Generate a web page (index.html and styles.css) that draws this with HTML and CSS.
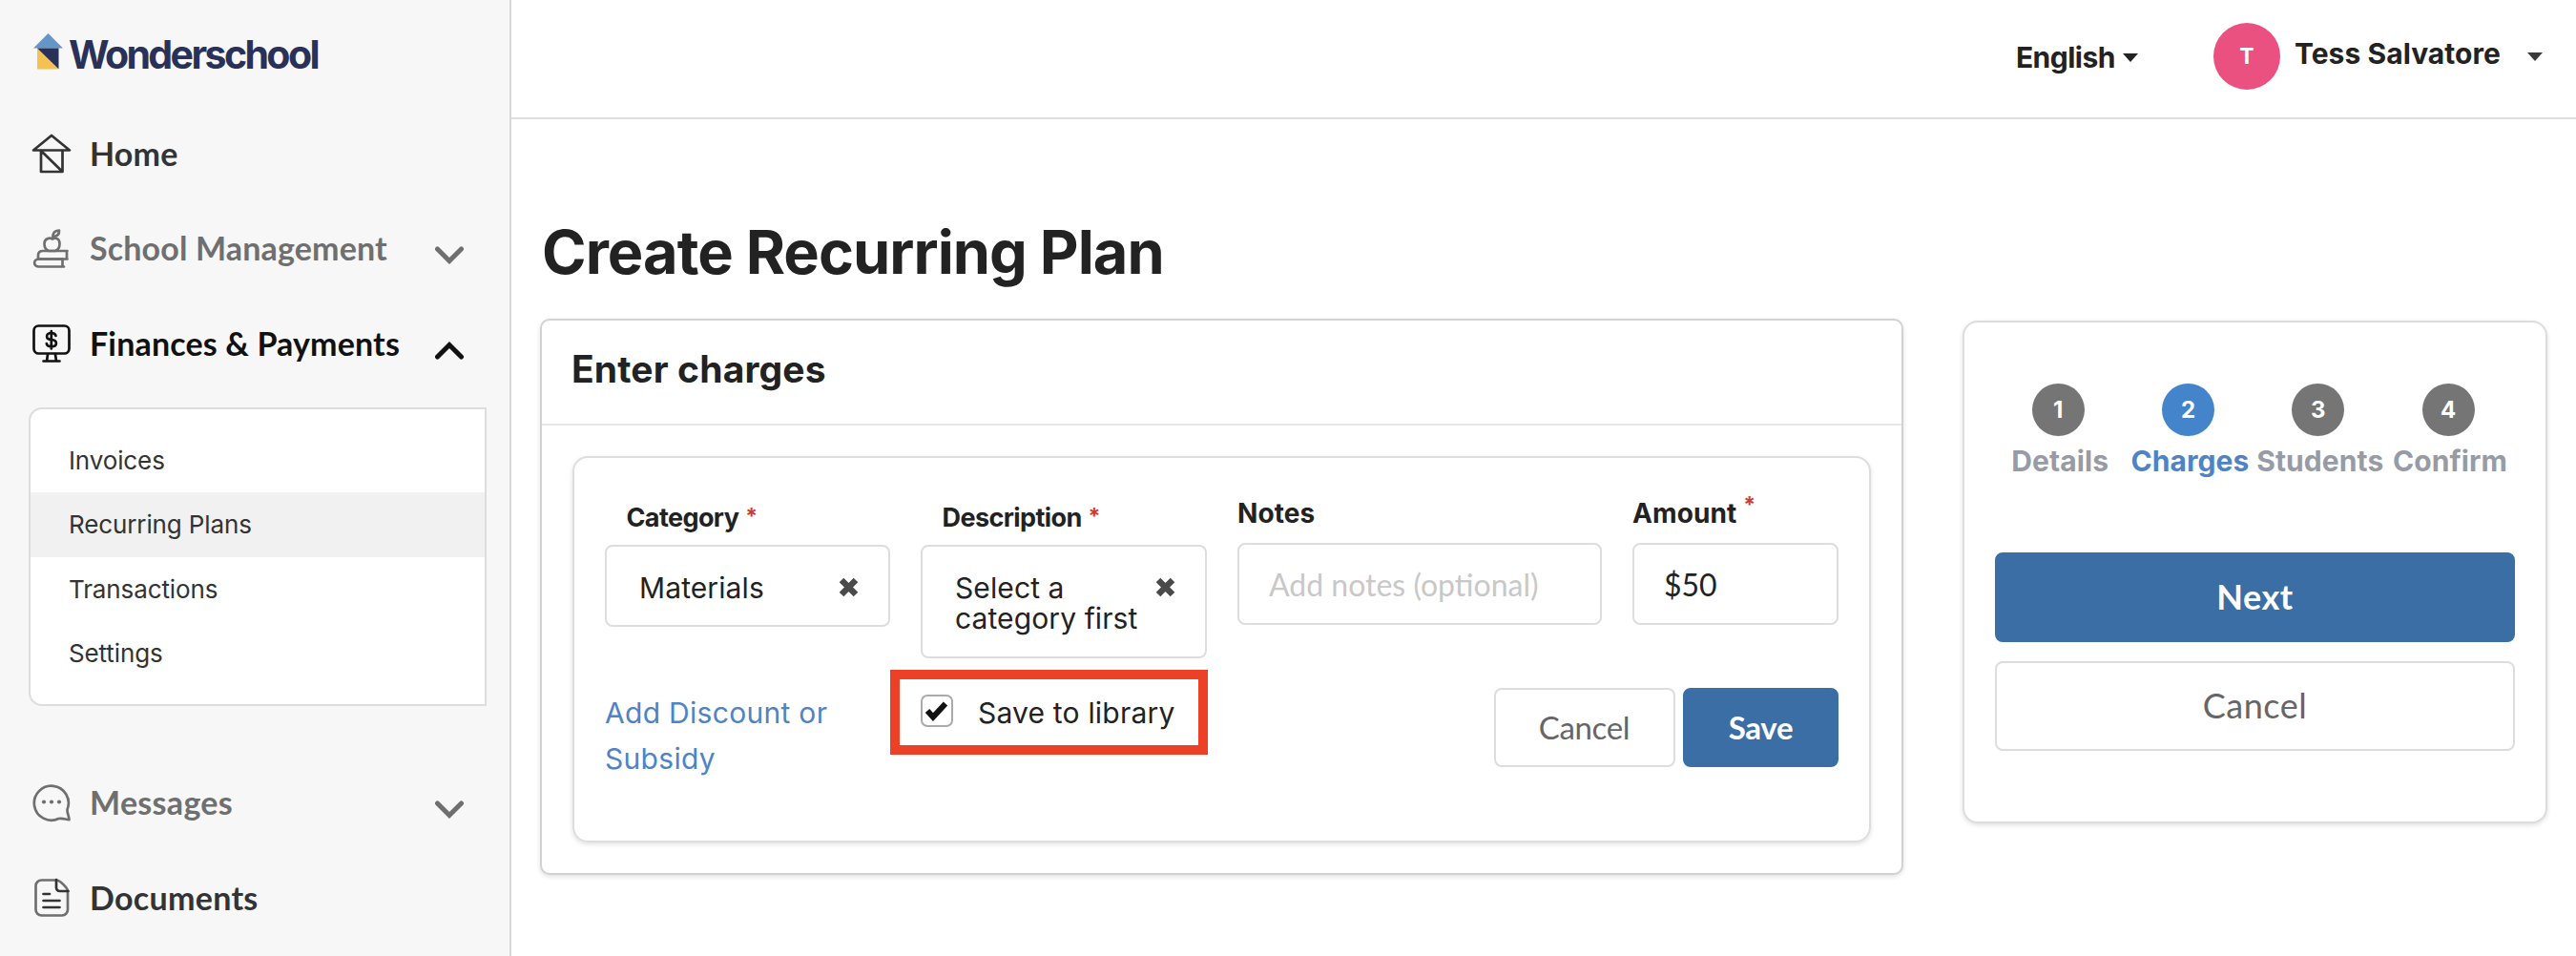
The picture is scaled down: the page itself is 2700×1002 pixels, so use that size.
FILE: index.html
```
<!DOCTYPE html>
<html lang="en">
<head>
  <meta charset="UTF-8">
  <title>Create Recurring Plan - Wonderschool</title>
  <link rel="stylesheet" href="styles.css">
</head>
<body>
  <aside class="sidebar">
    <div class="logo">
      <svg class="logo-mark" width="31" height="38" viewBox="0 0 31 38">
        <path d="M15.5 0L31 15.5H0z" fill="#6497c9"/>
        <path d="M4 15.5V37.5H26z" fill="#f4c152"/>
        <path d="M4 15.5H26.500V37.500z" fill="#2a3158"/>
      </svg>
      <span class="logo-text">Wonderschool</span>
    </div>

    <nav>
      <a class="nav-item dark">
        <svg class="icon" viewBox="0 0 44 44">
          <path d="M3 18.500L22 3l19 15.500z"/>
          <path d="M11 19v22h22.500V19M11.500 19.500l21.500 21"/>
        </svg>
        <span>Home</span>
      </a>
      <a class="nav-item">
        <svg class="icon" viewBox="0 0 44 44">
          <path d="M23 12.500c-3-1.800-8.500-.8-8.500 5 0 3.500 2 6.500 4.500 7.500h7c2.500-1 4.500-4 4.500-7.500 0-5.800-4.500-6.800-7.500-5z"/>
          <path d="M23.500 11.500c-.5-5 1.500-8 6.500-8 .2 4-2 6-5.500 6.500"/>
          <path d="M38.500 25H13c-4 0-5 2-5 4.500V33M38 25v8.500M9 33.500h29.500"/>
          <path d="M34 33.500H9c-6.500 0-6.500 8 0 8h26M33.500 34v7.500"/>
        </svg>
        <span>School Management</span>
        <svg class="chevron" viewBox="0 0 30 20"><path d="M2.500 3L15 15.500 27.500 3"/></svg>
      </a>
      <a class="nav-item active">
        <svg class="icon" viewBox="0 0 44 44">
          <rect x="3.500" y="3.500" width="37" height="29" rx="5"/>
          <path d="M26.500 14c-.4-2-2-3-4.700-3-6.300 0-6.200 6.700 0 7 6.800.3 6.800 7.300 0 7.300-2.800 0-4.600-1.200-5-3.300M21.800 9v18.500"/>
          <path d="M18 33.500l-1 7M26 33.500l1 7M13.500 40.500h17"/>
        </svg>
        <span>Finances &amp; Payments</span>
        <svg class="chevron" viewBox="0 0 30 20"><path d="M2.500 17L15 4.500 27.500 17"/></svg>
      </a>

      <div class="submenu">
        <a>Invoices</a>
        <a class="selected">Recurring Plans</a>
        <a>Transactions</a>
        <a>Settings</a>
      </div>

      <a class="nav-item messages">
        <svg class="icon" viewBox="0 0 44 44">
          <path d="M38.500 29.500a18 18 0 1 0-9 9.500c4-.9 7 .8 11 1.200-.3-4-2.200-7-2-10.700z"/>
          <g class="dots"><circle cx="14" cy="21.500" r="2.100"/><circle cx="22" cy="21.500" r="2.100"/><circle cx="30" cy="21.500" r="2.100"/></g>
        </svg>
        <span>Messages</span>
        <svg class="chevron" viewBox="0 0 30 20"><path d="M2.500 3L15 15.500 27.500 3"/></svg>
      </a>
      <a class="nav-item dark documents">
        <svg class="icon" viewBox="0 0 44 44">
          <path class="page" d="M27 3.500H11.500a6 6 0 0 0-6 6v25a6 6 0 0 0 6 6h21.500a6 6 0 0 0 6-6V15c0-3-8-11.500-12-11.500z"/>
          <path d="M27 3v8.500a3.500 3.500 0 0 0 3.500 3.500H39.500M13.500 18h6.500M13.500 25h17M13.500 32h17"/>
        </svg>
        <span>Documents</span>
      </a>
    </nav>
  </aside>

  <div class="page-body">
    <header class="topbar">
      <div class="language">English <span class="caret"></span></div>
      <div class="avatar">T</div>
      <div class="user-name">Tess Salvatore</div>
      <span class="caret user-caret"></span>
    </header>

    <main>
      <h1>Create Recurring Plan</h1>
      <div class="columns">
        <section class="card charges">
          <h2>Enter charges</h2>
          <form class="charge">
            <div class="field">
              <label class="small">Category<span class="required">*</span></label>
              <div class="select">
                <span>Materials</span>
                <svg class="clear" viewBox="0 0 21 21"><path d="M3 3l15 15M18 3L3 18"/></svg>
              </div>
            </div>
            <div class="field">
              <label class="small">Description<span class="required">*</span></label>
              <div class="select">
                <span>Select a<br>category first</span>
                <svg class="clear" viewBox="0 0 21 21"><path d="M3 3l15 15M18 3L3 18"/></svg>
              </div>
            </div>
            <div class="field">
              <label for="notes">Notes</label>
              <input type="text" id="notes" placeholder="Add notes (optional)">
            </div>
            <div class="field">
              <label for="amount">Amount<span class="required">*</span></label>
              <input type="text" id="amount" value="$50">
            </div>

            <a class="discount">Add Discount or<br>Subsidy</a>
            <div class="library">
              <span class="checkbox">
                <svg viewBox="0 0 30 30"><path d="M5 15l6 6.500L24 7.500"/></svg>
              </span>
              Save to library
            </div>
            <div class="actions">
              <button type="button" class="btn">Cancel</button>
              <button type="button" class="btn primary">Save</button>
            </div>
          </form>
        </section>

        <section class="card progress">
          <div class="steps">
            <div class="step"><span class="number">1</span><span class="step-name">Details</span></div>
            <div class="step current"><span class="number">2</span><span class="step-name">Charges</span></div>
            <div class="step"><span class="number">3</span><span class="step-name">Students</span></div>
            <div class="step"><span class="number">4</span><span class="step-name">Confirm</span></div>
          </div>
          <button type="button" class="btn large primary">Next</button>
          <button type="button" class="btn large">Cancel</button>
        </section>
      </div>
    </main>
  </div>
</body>
</html>
```
FILE: styles.css
```
*,
*::after {
  box-sizing: border-box;
}
body {
  margin: 0;
  display: flex;
  height: 1002px;
  overflow: hidden;
  background: #fff;
  color: #222;
  font-family: Inter, "Liberation Sans", sans-serif;
}

/* Sidebar */
.sidebar {
  width: 536px;
  flex: none;
  background: #f7f7f7;
  border-right: 2px solid #d8d8d8;
}
.logo {
  display: flex;
  height: 111px;
  padding: 35px 0 0 35px;
}
.logo-mark {
  flex: none;
}
.logo-text {
  margin-left: 6px;
  color: #2a3158;
  font-size: 41px;
  font-weight: 700;
  line-height: 44px;
  letter-spacing: -2.6px;
}
.nav-item {
  display: flex;
  align-items: center;
  height: 99.5px;
  padding: 0 48px 0 32px;
  color: #6f6f6f;
  font-family: Lato, sans-serif;
  font-size: 34px;
  font-weight: 700;
  letter-spacing: 0.15px;
}
.nav-item span {
  padding-bottom: 1.5px;
}
.nav-item.dark {
  color: #333;
}
.nav-item.active {
  color: #111;
}
.nav-item.messages,
.nav-item.documents {
  height: 100px;
  letter-spacing: 0.3px;
}
.icon {
  width: 44px;
  height: 44px;
  margin-right: 18px;
  fill: none;
  stroke: currentColor;
  stroke-width: 2.7;
  stroke-linecap: round;
  stroke-linejoin: round;
}
.icon .dots {
  fill: currentColor;
  stroke: none;
}
.icon .page {
  stroke: #6f6f6f;
}
.chevron {
  width: 30px;
  height: 20px;
  margin: 15px 0 0 auto;
  fill: none;
  stroke: currentColor;
  stroke-width: 5;
  stroke-linecap: round;
}
.submenu {
  width: 480px;
  height: 313px;
  margin: 17.5px 0 51px 30px;
  padding-top: 20px;
  background: #fff;
  border: 2px solid #ddd;
  border-radius: 14px 0 0 14px;
}
.submenu a {
  display: block;
  height: 67.3px;
  padding-left: 40px;
  color: #333;
  font-size: 26px;
  line-height: 68.5px;
  letter-spacing: -0.12px;
}
.submenu .selected {
  background: #f1f1f1;
}

/* Top bar */
.page-body {
  flex: 1;
}
.topbar {
  display: flex;
  align-items: center;
  justify-content: flex-end;
  height: 125px;
  padding: 0 35px 5px 0;
  border-bottom: 2px solid #ddd;
  font-size: 30px;
  font-weight: 700;
}
.language {
  display: flex;
  align-items: center;
  gap: 8px;
  padding-top: 2px;
  letter-spacing: -0.5px;
}
.caret {
  border: 8px solid transparent;
  border-top: 9px solid #222;
  border-bottom: 0;
}
.user-caret {
  margin-left: 28px;
  border-top-color: #3a3a3a;
}
.avatar {
  width: 70px;
  height: 70px;
  margin: 0 15px 0 79px;
  border-radius: 50%;
  background: #ea5080;
  color: #fff;
  font-size: 23px;
  line-height: 70px;
  text-align: center;
}
.user-name {
  margin-bottom: 6px;
  letter-spacing: 0.05px;
}

/* Content */
main {
  padding: 101px 30px 0;
}
h1 {
  margin: 0 0 32px 2px;
  font-size: 63px;
  font-weight: 700;
  line-height: 76px;
  letter-spacing: -0.95px;
}
.columns {
  display: flex;
  align-items: flex-start;
  gap: 62.5px;
}
.card {
  background: #fff;
  border: 2px solid #ddd;
  border-radius: 16px;
  box-shadow: 0 2px 5px rgba(0, 0, 0, 0.12);
}
.charges {
  width: 1428.5px;
  border-color: #d2d2d2;
  border-radius: 10px;
}
h2 {
  height: 110px;
  margin: 0;
  padding-left: 31px;
  border-bottom: 2px solid #e8e8e8;
  font-size: 39px;
  font-weight: 700;
  line-height: 102px;
  letter-spacing: 0.15px;
}
.charge {
  display: grid;
  grid-template-columns: 298.5px 299.5px 381.5px 216px;
  grid-template-rows: 179px auto;
  column-gap: 32.5px;
  row-gap: 32px;
  height: 404.5px;
  margin: 32px;
  padding: 30px 0 0 32px;
  border: 2px solid #ddd;
  border-radius: 16px;
  box-shadow: 0 2px 5px rgba(0, 0, 0, 0.12);
}
label {
  display: block;
  height: 59px;
  font-size: 28px;
  font-weight: 700;
  line-height: 56px;
  letter-spacing: 0.1px;
  white-space: nowrap;
}
label.small {
  height: 61px;
  padding-left: 22.5px;
  font-size: 27px;
  line-height: 66px;
  letter-spacing: -0.6px;
}
.required {
  position: relative;
  top: -11px;
  margin-left: 7px;
  color: #cf3a32;
  font-size: 23px;
  line-height: 1;
}
.small .required {
  top: -3px;
}
.select {
  display: flex;
  justify-content: space-between;
  padding: 26.5px 31px 23px 34px;
  border: 2px solid #ddd;
  border-radius: 8px;
  font-size: 30px;
  line-height: 32.5px;
  letter-spacing: 0.1px;
}
.clear {
  flex: none;
  width: 21px;
  height: 21px;
  margin-top: 5px;
  stroke: #4a4a4a;
  stroke-width: 6.5;
}
input {
  display: block;
  width: 100%;
  height: 86px;
  padding: 0 31px;
  border: 2px solid #ddd;
  border-radius: 8px;
  color: #222;
  font-family: Lato, sans-serif;
  font-size: 32px;
}
input::placeholder {
  color: #c8c8c8;
}
.discount {
  padding-top: 2px;
  color: #4f83c4;
  font-size: 30px;
  line-height: 48px;
  letter-spacing: 0.3px;
}
.library {
  position: relative;
  display: flex;
  align-items: center;
  gap: 26px;
  height: 48px;
  margin-top: 2px;
  font-size: 30px;
  letter-spacing: 0.2px;
}
/* red frame drawn over the row */
.library::after {
  content: "";
  position: absolute;
  top: -21px;
  left: -32px;
  width: 333px;
  height: 89px;
  border: 10px solid #ec4127;
}
.checkbox {
  width: 34px;
  height: 34px;
  margin-bottom: 4px;
  border: 2px solid #aaa;
  border-radius: 7px;
}
.checkbox svg {
  display: block;
  fill: none;
  stroke: #111;
  stroke-width: 6;
}
.actions {
  grid-column: 3 / 5;
  display: flex;
  justify-content: flex-end;
  gap: 8.5px;
}
.btn {
  width: 190px;
  height: 83px;
  padding: 0 0 1px;
  background: #fff;
  border: 2px solid #ddd;
  border-radius: 8px;
  color: #666;
  font-family: Lato, sans-serif;
  font-size: 33px;
  letter-spacing: -0.35px;
}
.btn.primary {
  width: 163px;
  background: #3a6ea5;
  border-color: #3a6ea5;
  color: #fff;
  font-weight: 700;
}
.btn.large,
.btn.large.primary {
  display: block;
  width: 100%;
  height: 94px;
  padding-bottom: 3px;
  font-size: 36px;
  letter-spacing: 0.5px;
}

/* Steps */
.progress {
  width: 613px;
  height: 527px;
  margin-top: 2px;
  padding: 64px 32px 0;
}
.steps {
  display: grid;
  grid-template-columns: repeat(4, 136.3px);
  margin: 0 0 76px -2px;
}
.step {
  display: flex;
  flex-direction: column;
  align-items: center;
  color: #969ba5;
}
.number {
  width: 55px;
  height: 55px;
  border-radius: 50%;
  background: #757575;
  color: #fff;
  font-size: 24px;
  font-weight: 700;
  line-height: 55px;
  text-align: center;
}
.step-name {
  margin-top: 6px;
  padding-left: 4px;
  font-size: 30px;
  font-weight: 700;
  line-height: 40px;
  letter-spacing: 0.1px;
}
.current {
  color: #4f83c4;
}
.current .number {
  background: #4384cb;
}
.progress .btn + .btn {
  margin-top: 20px;
}
```
